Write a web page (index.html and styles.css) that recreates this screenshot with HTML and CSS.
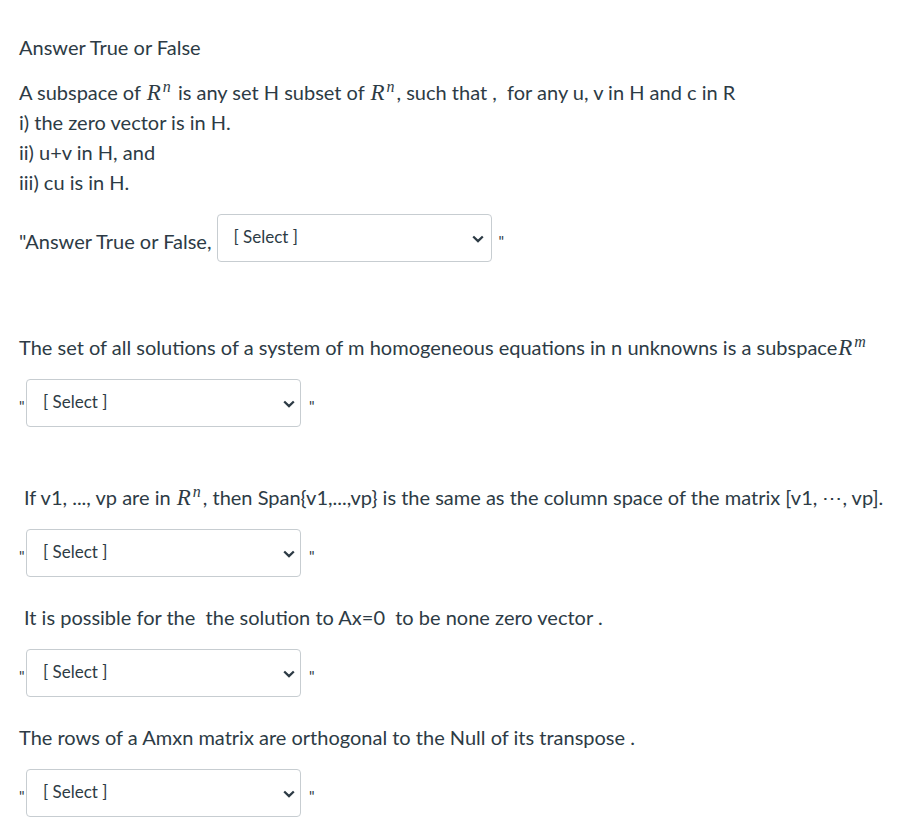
FILE: index.html
```html
<!DOCTYPE html>
<html lang="en">
<head>
<meta charset="utf-8">
<title>Answer True or False</title>
<link rel="stylesheet" href="styles.css">
</head>
<body>
<div class="page">
  <p class="title">Answer True or False</p>
  <p class="def">A subspace of <span class="math">R<sup>n</sup></span> is any set H subset of <span class="math">R<sup>n</sup></span>, such that ,&nbsp; for any u, v in H and c in R<br>i) the zero vector is in H.<br>ii) u+v in H, and<br>iii) cu is in H.</p>

  <div class="row1">
    <span class="lead">"Answer True or False,</span>
    <div class="select wide"><span class="stext">[ Select ]</span><svg class="chev" width="12" height="8" viewBox="0 0 12 8"><path d="M1.2 1.5 L6 6.1 L10.8 1.5" fill="none" stroke="#2d3b45" stroke-width="2.3"/></svg></div>
    <span class="q after1">"</span>
  </div>

  <p class="qtext gap-big">The set of all solutions of a system of m homogeneous equations in n unknowns is a subspace<span class="math">R<sup>m</sup></span></p>
  <div class="row">
    <span class="q">"</span>
    <div class="select"><span class="stext">[ Select ]</span><svg class="chev" width="12" height="8" viewBox="0 0 12 8"><path d="M1.2 1.5 L6 6.1 L10.8 1.5" fill="none" stroke="#2d3b45" stroke-width="2.3"/></svg></div>
    <span class="q after">"</span>
  </div>

  <p class="qtext gap-xl indent">If v1, ..., vp are in <span class="math">R<sup>n</sup></span>, then Span{v1,...,vp} is the same as the column space of the matrix [v1, ⋯, vp].</p>
  <div class="row">
    <span class="q">"</span>
    <div class="select"><span class="stext">[ Select ]</span><svg class="chev" width="12" height="8" viewBox="0 0 12 8"><path d="M1.2 1.5 L6 6.1 L10.8 1.5" fill="none" stroke="#2d3b45" stroke-width="2.3"/></svg></div>
    <span class="q after">"</span>
  </div>

  <p class="qtext gap-sm indent">It is possible for the&nbsp; the solution to Ax=0&nbsp; to be none zero vector .</p>
  <div class="row">
    <span class="q">"</span>
    <div class="select"><span class="stext">[ Select ]</span><svg class="chev" width="12" height="8" viewBox="0 0 12 8"><path d="M1.2 1.5 L6 6.1 L10.8 1.5" fill="none" stroke="#2d3b45" stroke-width="2.3"/></svg></div>
    <span class="q after">"</span>
  </div>

  <p class="qtext gap-sm">The rows of a Amxn matrix are orthogonal to the Null of its transpose .</p>
  <div class="row">
    <span class="q">"</span>
    <div class="select"><span class="stext">[ Select ]</span><svg class="chev" width="12" height="8" viewBox="0 0 12 8"><path d="M1.2 1.5 L6 6.1 L10.8 1.5" fill="none" stroke="#2d3b45" stroke-width="2.3"/></svg></div>
    <span class="q after">"</span>
  </div>
</div>
</body>
</html>
```

FILE: styles.css
```css
html, body {
  margin: 0;
  padding: 0;
  background: #ffffff;
}

body {
  font-family: Lato, "Open Sans", sans-serif;
  font-size: 20px;
  line-height: 30px;
  color: #2d3b45;
}

.page {
  padding: 32px 0 0 19px;
  display: flex;
  flex-direction: column;
  align-items: flex-start;
}

p {
  margin: 0;
}

.def {
  margin-top: 15px;
}

.math {
  font-family: "Liberation Serif", "DejaVu Serif", serif;
  font-style: italic;
  font-size: 23px;
  line-height: 0;
  margin: 0 2px 0 1px;
}

.math sup {
  font-size: 16px;
  line-height: 0;
  vertical-align: 0;
  position: relative;
  top: -8px;
  margin-left: 2px;
}

.row1 {
  margin-top: 17px;
  display: flex;
  align-items: flex-start;
}

.lead {
  margin-top: 12px;
  margin-right: 6px;
}

.select {
  box-sizing: border-box;
  width: 275px;
  height: 48px;
  border: 1px solid #c7cdd1;
  border-radius: 4px;
  background: #fff;
  display: flex;
  align-items: center;
  justify-content: space-between;
  padding: 0 5px 0 16px;
  font-size: 17px;
}

.select.wide {
  padding-left: 15px;
  padding-right: 7px;
}

.stext {
  position: relative;
  top: -1px;
}

.chev {
  display: block;
  position: relative;
  top: 1px;
}

.q {
  font-size: 15px;
  line-height: 15px;
}

.row {
  margin-top: 17px;
  display: flex;
  align-items: center;
}

.row .q {
  margin-right: 1.5px;
  position: relative;
  top: 3px;
}

.row .q.after {
  margin-left: 8px;
  margin-right: 0;
}

.after1 {
  margin-left: 6px;
  margin-top: 20px;
}

.gap-big { margin-top: 70px; }
.gap-xl { margin-top: 55px; }
.gap-sm { margin-top: 25px; }

.indent {
  margin-left: 5px;
}
```
